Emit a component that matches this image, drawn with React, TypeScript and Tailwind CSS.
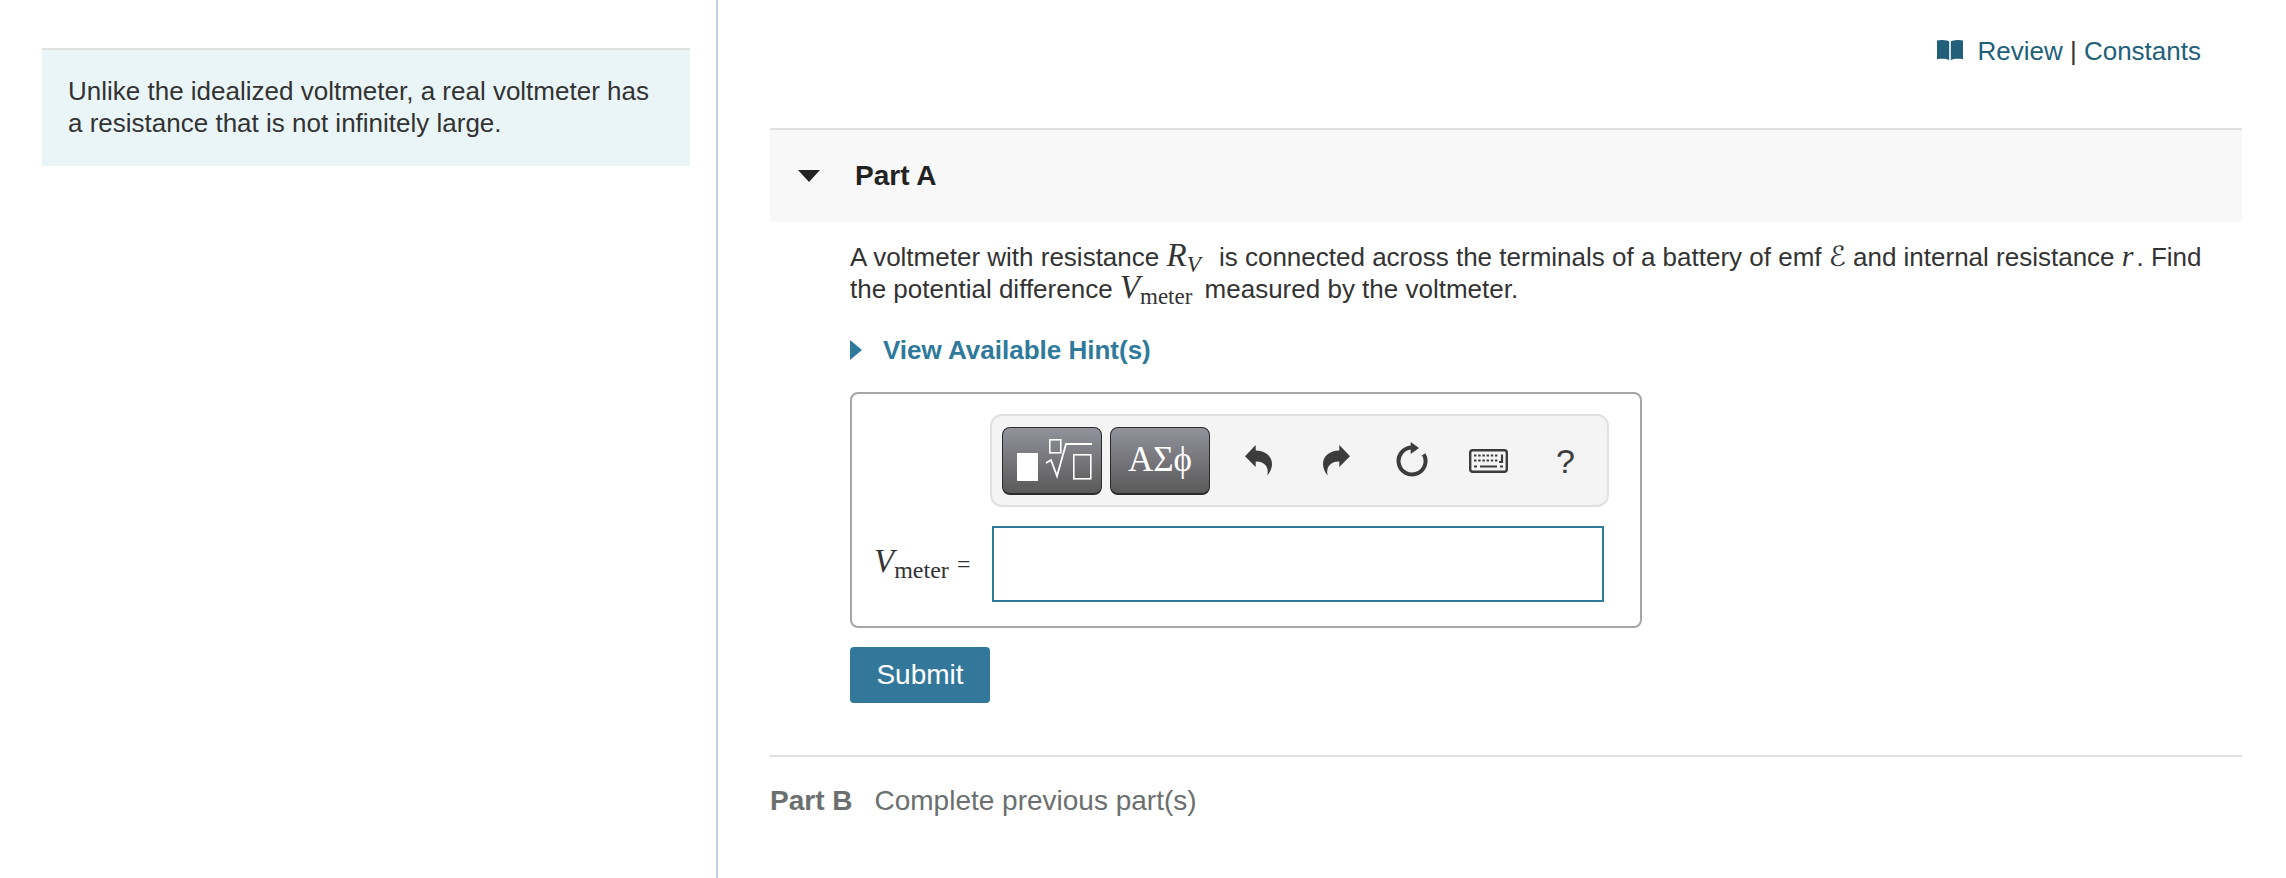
const Undo = ({ flip = false }: { flip?: boolean }) => (
  <svg width="28" height="31" viewBox="0 0 28 31" className={flip ? '-scale-x-100' : ''} fill="#3c3c3c">
    <path d="M0 11.3 L10.7 0 V5.5 C20 5.5 27 11 27 19 C27 23 25 27.5 22.3 30.5 C24 24 21.5 16.5 10.7 16.5 V22 Z" />
  </svg>
)

const Reset = () => (
  <svg width="34" height="38" viewBox="0 0 34 38" fill="none">
    <path d="M16 5.5 A13.5 13.5 0 1 0 27.7 12.2" stroke="#3c3c3c" strokeWidth="4" />
    <path d="M14.7 0 L23 6 L14.7 12 Z" fill="#3c3c3c" />
  </svg>
)

const Keyboard = () => (
  <svg width="39" height="24" viewBox="0 0 39 24" fill="none" stroke="#3c3c3c">
    <rect x="1.2" y="1.2" width="36.6" height="21.6" rx="2.5" strokeWidth="2.4" />
    <path d="M5 6.5h25" strokeWidth="2.2" strokeDasharray="2.4 1.8" />
    <path d="M5 11.5h25" strokeWidth="2.2" strokeDasharray="2.4 1.8" />
    <path d="M33 5.5v7.5h-3" strokeWidth="2.2" />
    <path d="M5 17.5h3M11 17.5h17M31 17.5h3" strokeWidth="2.2" />
  </svg>
)

const Book = () => (
  <svg width="26" height="21" viewBox="0 0 26 21" fill="#22607a">
    <path d="M0 0.5 C4 -0.3 9 -0.3 12.2 1.5 V20 C9 18.6 4 18.6 0 19.2 Z" />
    <path d="M26 0.5 C22 -0.3 17 -0.3 13.8 1.5 V20 C17 18.6 22 18.6 26 19.2 Z" />
  </svg>
)

const TemplateIcon = () => (
  <svg width="76" height="43" viewBox="0 0 76 43" fill="none">
    <rect x="0" y="14" width="21" height="28" fill="#fff" />
    <rect x="32.8" y="0.8" width="11" height="13" stroke="#fff" strokeWidth="1.6" />
    <path d="M29 24 L34 21 L40 37 L49 5 H75" stroke="#fff" strokeWidth="1.8" />
    <rect x="56.8" y="15.8" width="17" height="24" stroke="#fff" strokeWidth="1.6" />
  </svg>
)

const math = { fontFamily: '"Liberation Serif", serif' }

export default function App() {
  return (
    <div className="flex h-[878px] w-[2286px] overflow-hidden bg-white font-['Liberation_Sans',sans-serif] text-[26px] leading-[32px] text-[#333]">
      <aside className="w-[718px] shrink-0 border-r-2 border-[#c3d0e0] pl-[42px] pr-[26px] pt-[48px]">
        <div className="h-[118px] border-t-2 border-[#e0e0e0] bg-[#e9f5f7] px-[26px] pt-[25px]">
          Unlike the idealized voltmeter, a real voltmeter has a resistance that is not infinitely large.
        </div>
      </aside>

      <main className="w-[1524px] pl-[52px]">
        <div className="flex h-[128px] items-start justify-end gap-[14px] pr-[41px] pt-[35px] text-[#22607a]">
          <span className="mt-[5px]"><Book /></span>
          <span>Review <span className="text-[#333]">|</span> Constants</span>
        </div>

        <section>
          <div className="flex h-[94px] items-center border-t-2 border-[#e0e0e0] bg-[#f8f8f8] pl-[28px] text-[28px] font-bold text-[#222]">
            <span className="mr-[35px] h-0 w-0 border-x-[11px] border-t-[12px] border-x-transparent border-t-[#222]" />
            Part A
          </div>

          <div className="pl-[80px] pr-[20px] pt-[19px]">
            <p>
              A voltmeter with resistance <span className="mr-[11px] text-[33px] italic leading-[0]" style={math}>R<sub className="text-[23px] leading-[0]">V</sub></span> is connected across the terminals of a battery of emf <span className="font-['DejaVu_Sans'] text-[28px] leading-[0]">ℰ</span> and internal resistance <span className="mr-[3px] text-[30px] italic leading-[0]" style={math}>r</span>. Find the potential difference <span className="mr-[5px] text-[33px] leading-[0]" style={math}><i>V</i><sub className="text-[23px] leading-[0]">meter</sub></span> measured by the voltmeter.
            </p>

            <div className="mt-[29px] flex items-center font-bold text-[#2f7a9b]">
              <span className="mr-[21px] h-0 w-0 border-y-[10px] border-l-[12px] border-y-transparent border-l-[#2f7a9b]" />
              View Available Hint(s)
            </div>

            <div className="mt-[26px] h-[236px] w-[792px] rounded-[8px] border-2 border-[#a6a6a6] pl-[22px] pr-[31px] pt-[20px]">
              <div className="ml-[116px] flex h-[93px] w-[619px] items-center rounded-[12px] border-2 border-[#e0e0e0] bg-[#f4f4f4] pl-[10px]">
                <button className="flex h-[68px] w-[100px] items-center justify-start rounded-[8px] border border-b-2 border-[#2b2b2b] bg-gradient-to-b from-[#92929c] to-[#5a5a5a] pl-[14px]">
                  <TemplateIcon />
                </button>
                <button className="ml-[8px] flex h-[68px] w-[100px] items-center justify-center rounded-[8px] border border-b-2 border-[#2b2b2b] bg-gradient-to-b from-[#92929c] to-[#5a5a5a] text-[35px] text-white" style={math}>
                  ΑΣϕ
                </button>
                <span className="ml-[35px]"><Undo /></span>
                <span className="ml-[49px]"><Undo flip /></span>
                <span className="ml-[46px]"><Reset /></span>
                <span className="ml-[39px]"><Keyboard /></span>
                <span className="ml-[48px] font-normal text-[34px] text-[#3c3c3c]">?</span>
              </div>

              <div className="mt-[19px] flex items-center">
                <span className="w-[118px] pb-[6px] text-[33px] leading-none text-[#333]" style={math}>
                  <i>V</i><sub className="text-[24px] leading-[0]">meter</sub> <span className="text-[24px]">=</span>
                </span>
                <div className="h-[76px] w-[612px] border-2 border-[#2f7a9b] bg-white" />
              </div>
            </div>

            <button className="mt-[19px] h-[56px] w-[140px] rounded-[4px] bg-[#33789b] text-[28px] text-white">Submit</button>
          </div>
        </section>

        <div className="mt-[52px] border-t-2 border-[#e0e0e0] pt-[28px] text-[28px] text-[#6b6f6f]">
          <span className="mr-[22px] font-bold">Part B</span>
          Complete previous part(s)
        </div>
      </main>
    </div>
  )
}
